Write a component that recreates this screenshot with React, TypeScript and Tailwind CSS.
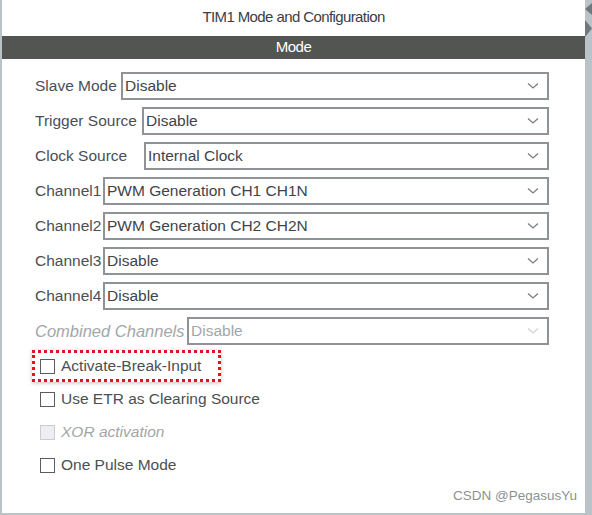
import React from 'react';

const font = { fontFamily: '"Liberation Sans", Arial, sans-serif' };

function Chevron({ disabled }: { disabled?: boolean }) {
  return (
    <svg width="12" height="8" viewBox="0 0 12 8" className="shrink-0">
      <path d="M1 1.5 L6 6 L11 1.5" fill="none" stroke={disabled ? '#d0d3d6' : '#7a7e82'} strokeWidth="1.3" />
    </svg>
  );
}

function Row({ label, value, labelW, disabled }: { label: string; value: string; labelW: string; disabled?: boolean }) {
  return (
    <div className="flex items-center h-[28px]">
      <div className={`${labelW} shrink-0 whitespace-nowrap ${disabled ? 'italic text-[16.5px] text-[#a3a6a9]' : 'text-[15.5px] text-[#4a4f55]'}`}>
        {label}
      </div>
      <div className="flex-1 h-[28px] border-2 border-[#8f9396] bg-white flex items-center justify-between pl-[2px] pr-[8px]">
        <span className={`text-[15.5px] ${disabled ? 'text-[#a3a6a9]' : 'text-[#3f444a]'}`}>{value}</span>
        <Chevron disabled={disabled} />
      </div>
    </div>
  );
}

function Check({ label, disabled }: { label: string; disabled?: boolean }) {
  return (
    <div className="flex items-center gap-[6px] h-[22px]">
      <div
        className={`w-[15px] h-[15px] border-[1.5px] ${disabled ? 'border-[#c9cdd1] bg-[#eceef0]' : 'border-[#5a5d60] bg-white'}`}
      />
      <span className={`text-[15.5px] ${disabled ? 'italic text-[#a3a6a9]' : 'text-[#4a4f55]'}`}>{label}</span>
    </div>
  );
}

export default function App() {
  return (
    <div className="w-[592px] h-[515px] bg-[#b9c3c8] flex overflow-hidden" style={font}>
      <div className="ml-[2px] w-[583px] h-[513px] bg-white flex flex-col relative">
        <div className="h-[36px] flex items-center justify-center pb-[2px] text-[15px] tracking-[-0.6px] text-[#3c4045]">
          TIM1 Mode and Configuration
        </div>
        <div className="h-[23px] bg-[#535553] flex items-center justify-center text-[15px] tracking-[-0.5px] text-white">Mode</div>

        <div className="pl-[33px] pr-[36px] pt-[13px] flex flex-col gap-[7px]">
          <Row label="Slave Mode" value="Disable" labelW="w-[86px]" />
          <Row label="Trigger Source" value="Disable" labelW="w-[107px]" />
          <Row label="Clock Source" value="Internal Clock" labelW="w-[109px]" />
          <Row label="Channel1" value="PWM Generation CH1 CH1N" labelW="w-[68px]" />
          <Row label="Channel2" value="PWM Generation CH2 CH2N" labelW="w-[68px]" />
          <Row label="Channel3" value="Disable" labelW="w-[68px]" />
          <Row label="Channel4" value="Disable" labelW="w-[68px]" />
          <Row label="Combined Channels" value="Disable" labelW="w-[152px]" disabled />
        </div>

        <div className="pl-[38px] pt-[10px] flex flex-col gap-[11px]">
          <div className="relative">
            <div className="absolute -left-[8px] -top-[5px] w-[189px] h-[32px] border-[3px] border-dotted border-[#e0141c] shadow-[0_1px_4px_rgba(0,0,0,0.25)]" />
            <Check label="Activate-Break-Input" />
          </div>
          <Check label="Use ETR as Clearing Source" />
          <Check label="XOR activation" disabled />
          <Check label="One Pulse Mode" />
        </div>

        <div className="absolute right-[8px] bottom-[7px] text-[13.5px] text-[#8d9194]">CSDN @PegasusYu</div>
      </div>
      <div className="flex-1 flex flex-col items-center pt-[3px] gap-[5px]">
        <svg width="7" height="12" viewBox="0 0 7 12">
          <path d="M7 0 L0 6 L7 12 Z" fill="#6f787d" />
        </svg>
        <svg width="7" height="17" viewBox="0 0 7 17">
          <path d="M0 0 L7 8.5 L0 17 Z" fill="#6f787d" />
        </svg>
      </div>
    </div>
  );
}
